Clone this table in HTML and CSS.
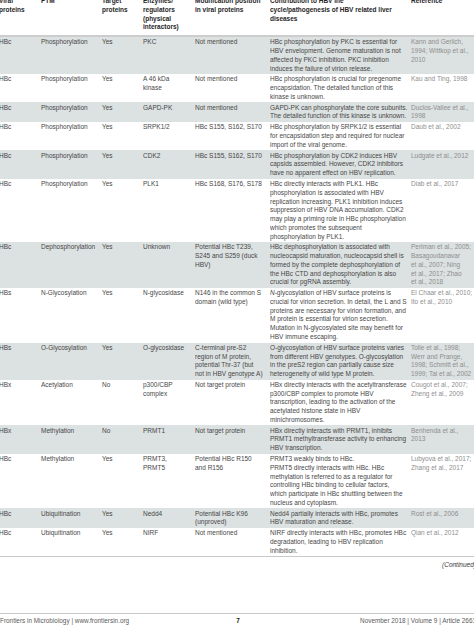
FILE: index.html
```html
<!DOCTYPE html>
<html lang="en">
<head>
<meta charset="utf-8">
<title>PTMs of HBV proteins</title>
<link rel="stylesheet" href="styles.css">
</head>
<body>
<div class="page">
<table class="ptm">
<colgroup>
<col class="c1"><col class="c2"><col class="c3"><col class="c4"><col class="c5"><col class="c6"><col class="c7">
</colgroup>
<thead>
<tr>
<th>Viral<br>proteins</th>
<th>PTM</th>
<th>Target<br>proteins</th>
<th>Enzymes/<br>regulators<br>(physical<br>interactors)</th>
<th>Modification position<br>in viral proteins</th>
<th>Contribution to HBV life<br>cycle/pathogenesis of HBV related liver<br>diseases</th>
<th>Reference</th>
</tr>
</thead>
<tbody>
<tr class="shade">
<td>HBc</td><td>Phosphorylation</td><td>Yes</td><td>PKC</td><td>Not mentioned</td>
<td>HBc phosphorylation by PKC is essential for<br>HBV envelopment. Genome maturation is not<br>affected by PKC inhibition. PKC inhibition<br>induces the failure of virion release.</td>
<td class="ref">Kann and Gerlich,<br>1994; Wittkop et al.,<br>2010</td>
</tr>
<tr>
<td>HBc</td><td>Phosphorylation</td><td>Yes</td><td>A 46 kDa<br>kinase</td><td>Not mentioned</td>
<td>HBc phosphorylation is crucial for pregenome<br>encapsidation. The detailed function of this<br>kinase is unknown.</td>
<td class="ref">Kau and Ting, 1998</td>
</tr>
<tr class="shade">
<td>HBc</td><td>Phosphorylation</td><td>Yes</td><td>GAPD-PK</td><td>Not mentioned</td>
<td>GAPD-PK can phosphorylate the core subunits.<br>The detailed function of this kinase is unknown.</td>
<td class="ref">Duclos-Vallee et al.,<br>1998</td>
</tr>
<tr>
<td>HBc</td><td>Phosphorylation</td><td>Yes</td><td>SRPK1/2</td><td>HBc S155, S162, S170</td>
<td>HBc phosphorylation by SRPK1/2 is essential<br>for encapsidation step and required for nuclear<br>import of the viral genome.</td>
<td class="ref">Daub et al., 2002</td>
</tr>
<tr class="shade">
<td>HBc</td><td>Phosphorylation</td><td>Yes</td><td>CDK2</td><td>HBc S155, S162, S170</td>
<td>HBc phosphorylation by CDK2 induces HBV<br>capsids assembled. However, CDK2 inhibitors<br>have no apparent effect on HBV replication.</td>
<td class="ref">Ludgate et al., 2012</td>
</tr>
<tr>
<td>HBc</td><td>Phosphorylation</td><td>Yes</td><td>PLK1</td><td>HBc S168, S176, S178</td>
<td>HBc directly interacts with PLK1. HBc<br>phosphorylation is associated with HBV<br>replication increasing. PLK1 inhibition induces<br>suppression of HBV DNA accumulation. CDK2<br>may play a priming role in HBc phosphorylation<br>which promotes the subsequent<br>phosphorylation by PLK1.</td>
<td class="ref">Diab et al., 2017</td>
</tr>
<tr class="shade">
<td>HBc</td><td>Dephosphorylation</td><td>Yes</td><td>Unknown</td><td>Potential HBc T239,<br>S245 and S259 (duck<br>HBV)</td>
<td>HBc dephosphorylation is associated with<br>nucleocapsid maturation, nucleocapsid shell is<br>formed by the complete dephosphorylation of<br>the HBc CTD and dephosphorylation is also<br>crucial for pgRNA assembly.</td>
<td class="ref">Perlman et al., 2005;<br>Basagoudanavar<br>et al., 2007; Ning<br>et al., 2017; Zhao<br>et al., 2018</td>
</tr>
<tr>
<td>HBs</td><td>N-Glycosylation</td><td>Yes</td><td>N-glycosidase</td><td>N146 in the common S<br>domain (wild type)</td>
<td><i>N</i>-glycosylation of HBV surface proteins is<br>crucial for virion secretion. In detail, the L and S<br>proteins are necessary for virion formation, and<br>M protein is essential for virion secretion.<br>Mutation in N-glycosylated site may benefit for<br>HBV immune escaping.</td>
<td class="ref">El Chaar et al., 2010;<br>Ito et al., 2010</td>
</tr>
<tr class="shade">
<td>HBs</td><td>O-Glycosylation</td><td>Yes</td><td>O-glycosidase</td><td>C-terminal pre-S2<br>region of M protein,<br>potential Thr-37 (but<br>not in HBV genotype A)</td>
<td>O-glycosylation of HBV surface proteins varies<br>from different HBV genotypes. O-glycosylation<br>in the preS2 region can partially cause size<br>heterogeneity of wild type M protein.</td>
<td class="ref">Tolle et al., 1998;<br>Werr and Prange,<br>1998; Schmitt et al.,<br>1999; Tai et al., 2002</td>
</tr>
<tr>
<td>HBx</td><td>Acetylation</td><td>No</td><td>p300/CBP<br>complex</td><td>Not target protein</td>
<td>HBx directly interacts with the acetyltransferase<br>p300/CBP complex to promote HBV<br>transcription, leading to the activation of the<br>acetylated histone state in HBV<br>minichromosomes.</td>
<td class="ref">Cougot et al., 2007;<br>Zheng et al., 2009</td>
</tr>
<tr class="shade">
<td>HBx</td><td>Methylation</td><td>No</td><td>PRMT1</td><td>Not target protein</td>
<td>HBx directly interacts with PRMT1, inhibits<br>PRMT1 methyltransferase activity to enhancing<br>HBV transcription.</td>
<td class="ref">Benhenda et al.,<br>2013</td>
</tr>
<tr>
<td>HBc</td><td>Methylation</td><td>Yes</td><td>PRMT3,<br>PRMT5</td><td>Potential HBc R150<br>and R156</td>
<td>PRMT3 weakly binds to HBc.<br>PRMT5 directly interacts with HBc. HBc<br>methylation is referred to as a regulator for<br>controlling HBc binding to cellular factors,<br>which participate in HBc shuttling between the<br>nucleus and cytoplasm.</td>
<td class="ref">Lubyova et al., 2017;<br>Zhang et al., 2017</td>
</tr>
<tr class="shade">
<td>HBc</td><td>Ubiquitination</td><td>Yes</td><td>Nedd4</td><td>Potential HBc K96<br>(unproved)</td>
<td>Nedd4 partially interacts with HBc, promotes<br>HBV maturation and release.</td>
<td class="ref">Rost et al., 2006</td>
</tr>
<tr>
<td>HBc</td><td>Ubiquitination</td><td>Yes</td><td>NIRF</td><td>Not mentioned</td>
<td>NIRF directly interacts with HBc, promotes HBc<br>degradation, leading to HBV replication<br>inhibition.</td>
<td class="ref">Qian et al., 2012</td>
</tr>
</tbody>
</table>
<p class="continued">(Continued)</p>
<footer class="foot">
<span class="foot-left">Frontiers in Microbiology | www.frontiersin.org</span>
<span class="foot-page">7</span>
<span class="foot-right">November 2018 | Volume 9 | Article 2661</span>
</footer>
</div>
</body>
</html>
```
FILE: styles.css
```css
html, body {
  margin: 0;
  padding: 0;
  background: #ffffff;
  overflow: hidden;
}

body {
  font-family: "Liberation Sans", Arial, Helvetica, sans-serif;
  font-size: 6.5px;
  line-height: 8.75px;
  color: #474747;
}

.page {
  width: 477px;
  margin-left: -1px;
}

.ptm {
  width: 100%;
  table-layout: fixed;
  border-collapse: collapse;
  margin-top: -3px;
  border-bottom: 1px solid #c9c9c9;
}

.c1 { width: 42px; }
.c2 { width: 61px; }
.c3 { width: 41px; }
.c4 { width: 52px; }
.c5 { width: 75px; }
.c6 { width: 141px; }
.c7 { width: 65px; }

.ptm th,
.ptm td {
  text-align: left;
  vertical-align: top;
  white-space: nowrap;
  overflow: hidden;
  padding: 1.3px 3px 0.8px 0;
}

.ptm th {
  font-weight: bold;
  color: #262626;
  padding: 0 3px 3px 0;
  border-bottom: 2px solid #cdcdcd;
}

.shade td {
  background: #dce1e1;
}

.ref {
  color: #8e8e8e;
}

.continued {
  margin: 3.6px 0 0 0;
  text-align: right;
  font-style: italic;
  color: #3a3a3a;
}

.foot {
  display: grid;
  grid-template-columns: 1fr auto 1fr;
  margin-top: 43px;
  padding: 3px 0 0 1px;
  border-top: 1px solid #c9c9c9;
  font-size: 6.4px;
  color: #5a5a5a;
}

.foot-page {
  color: #222222;
  font-weight: bold;
}

.foot-right {
  text-align: right;
  white-space: nowrap;
}
```
